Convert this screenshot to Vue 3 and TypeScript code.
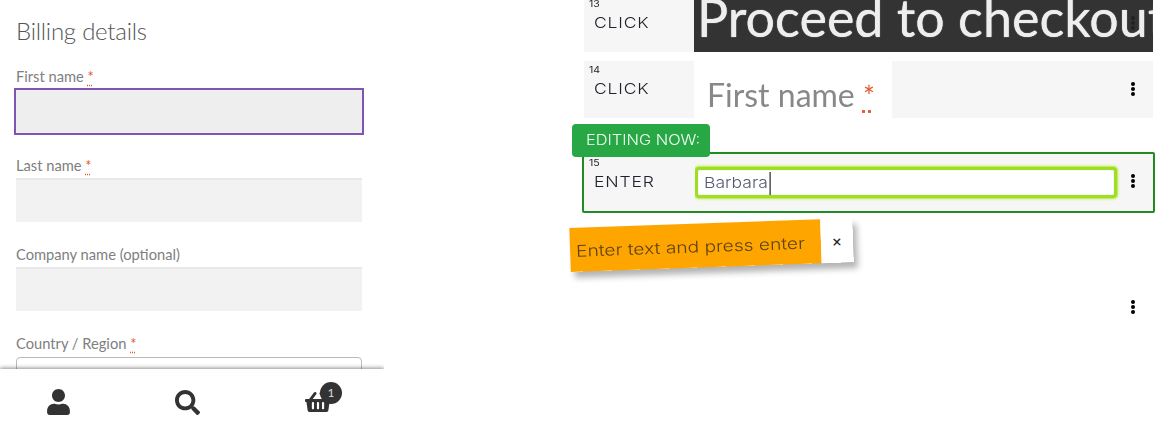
<script setup lang="ts">
interface Field {
  label: string;
  required: boolean;
  focused?: boolean;
}

const fields: Field[] = [
  { label: "First name", required: true, focused: true },
  { label: "Last name", required: true },
  { label: "Company name (optional)", required: false },
];
</script>

<template>
  <div class="page">
    <section class="shop">
      <h3 class="shop-title">Billing details</h3>
      <div v-for="field in fields" :key="field.label" class="field">
        <label class="field-label">
          {{ field.label }}
          <span v-if="field.required" class="req">*</span>
        </label>
        <div class="field-input" :class="{ focused: field.focused }"></div>
      </div>
      <div class="field">
        <label class="field-label">Country / Region <span class="req">*</span></label>
        <div class="field-select">Select</div>
      </div>

      <nav class="shop-nav">
        <svg class="nav-user" viewBox="0 0 448 512">
          <path d="M224 256c70.7 0 128-57.3 128-128S294.7 0 224 0 96 57.3 96 128s57.3 128 128 128zm89.6 32h-16.7c-22.2 10.2-46.9 16-72.9 16s-50.6-5.8-72.9-16h-16.7C60.2 288 0 348.2 0 422.4V464c0 26.5 21.5 48 48 48h352c26.5 0 48-21.5 48-48v-41.6c0-74.2-60.2-134.4-134.4-134.4z" />
        </svg>
        <svg class="nav-search" viewBox="0 0 512 512">
          <path d="M505 442.7L405.3 343c-4.5-4.5-10.6-7-17-7H372c27.6-35.3 44-79.7 44-128C416 93.1 322.9 0 208 0S0 93.1 0 208s93.1 208 208 208c48.3 0 92.7-16.4 128-44v16.3c0 6.4 2.5 12.5 7 17l99.7 99.7c9.4 9.4 24.6 9.4 33.9 0l28.3-28.3c9.4-9.4 9.4-24.6.1-34zM208 336c-70.7 0-128-57.2-128-128 0-70.7 57.2-128 128-128 70.7 0 128 57.2 128 128 0 70.7-57.2 128-128 128z" />
        </svg>
        <div class="nav-cart">
          <svg viewBox="0 0 576 512">
            <path d="M576 216v16c0 13.255-10.745 24-24 24h-8l-26.113 182.788C514.509 462.435 494.257 480 470.37 480H105.63c-23.887 0-44.139-17.565-47.518-41.212L32 256h-8c-13.255 0-24-10.745-24-24v-16c0-13.255 10.745-24 24-24h67.341l106.78-146.821c10.395-14.292 30.407-17.453 44.701-7.058 14.293 10.395 17.453 30.408 7.058 44.701L170.477 192h235.046L326.12 82.821c-10.395-14.292-7.234-34.306 7.059-44.701 14.291-10.395 34.306-7.235 44.701 7.058L484.659 192H552c13.255 0 24 10.745 24 24zM312 392V280c0-13.255-10.745-24-24-24s-24 10.745-24 24v112c0 13.255 10.745 24 24 24s24-10.745 24-24zm112 0V280c0-13.255-10.745-24-24-24s-24 10.745-24 24v112c0 13.255 10.745 24 24 24s24-10.745 24-24zm-224 0V280c0-13.255-10.745-24-24-24s-24 10.745-24 24v112c0 13.255 10.745 24 24 24s24-10.745 24-24z" />
          </svg>
          <span class="cart-badge">1</span>
        </div>
      </nav>
    </section>

    <section class="steps">
      <div class="step step-first">
        <div class="step-cell">
          <span class="step-num wide">13</span>
          <span class="step-action wide">CLICK</span>
        </div>
        <div class="shot shot-dark"><span>Proceed to checkout</span></div>
        <svg class="kebab kebab-faint" viewBox="0 0 4 14"><circle cx="2" cy="2" r="2" /><circle cx="2" cy="7" r="2" /><circle cx="2" cy="12" r="2" /></svg>
      </div>

      <div class="step">
        <div class="step-cell">
          <span class="step-num wide">14</span>
          <span class="step-action wide">CLICK</span>
        </div>
        <div class="shot-split">
          <div class="shot shot-light">First name <span class="req">*</span></div>
          <div class="shot-rest"></div>
        </div>
        <svg class="kebab" viewBox="0 0 4 14"><circle cx="2" cy="2" r="2" /><circle cx="2" cy="7" r="2" /><circle cx="2" cy="12" r="2" /></svg>
      </div>

      <div class="step step-editing">
        <div class="editing-badge"><span class="wide">EDITING NOW:</span></div>
        <div class="step-cell">
          <span class="step-num wide">15</span>
          <span class="step-action wide">ENTER</span>
        </div>
        <div class="enter-wrap">
          <div class="enter-input"><span class="enter-value wide">Barbara</span></div>
        </div>
        <svg class="kebab" viewBox="0 0 4 14"><circle cx="2" cy="2" r="2" /><circle cx="2" cy="7" r="2" /><circle cx="2" cy="12" r="2" /></svg>
      </div>

      <div class="hint">
        <div class="hint-text"><span class="wide">Enter text and press enter</span></div>
        <div class="hint-close">×</div>
      </div>

      <div class="step step-empty">
        <svg class="kebab" viewBox="0 0 4 14"><circle cx="2" cy="2" r="2" /><circle cx="2" cy="7" r="2" /><circle cx="2" cy="12" r="2" /></svg>
      </div>
    </section>
  </div>
</template>

<style>
html,
body {
  margin: 0;
  background: #fff;
  overflow: hidden;
}
</style>

<style scoped>
.page {
  display: flex;
  width: 1164px;
  height: 428px;
  overflow: hidden;
  gap: 186px;
}

/* left: the shop page being recorded */
.shop {
  position: relative;
  flex: 0 0 384px;
  height: 428px;
  overflow: hidden;
  padding: 16px 22px 0 16px;
  box-sizing: border-box;
  font-family: Lato, "Open Sans", sans-serif;
  color: #6d6d6d;
}

.shop-title {
  margin: 0 0 22px;
  font-size: 24px;
  line-height: 29px;
  font-weight: 300;
  letter-spacing: -0.25px;
  color: #555;
}

.field {
  margin-bottom: 23px;
}

.field-label {
  display: block;
  font-size: 14.7px;
  line-height: 18px;
  margin-bottom: 5px;
  color: #808080;
}

.req {
  color: #e2592c;
  text-decoration: underline dotted;
  text-underline-offset: 3px;
}

.field-input {
  height: 44px;
  margin-top: -1px;
  background: #f2f2f2;
  box-shadow: inset 0 2px 0 #e8e8e8;
}

.field-input.focused {
  height: 43px;
  margin-top: 0;
  background: #eee;
  box-shadow: none;
  outline: 2px solid #7f54b3;
}

.field-select {
  height: 40px;
  margin-top: 2px;
  box-sizing: border-box;
  border: 1px solid #bbb;
  border-radius: 4px;
  padding: 7px 8px;
  font-size: 15px;
  color: #333;
}

.shop-nav {
  position: absolute;
  left: 0;
  right: 0;
  bottom: 0;
  height: 59px;
  box-sizing: border-box;
  background: #fff;
  box-shadow: 0 -1px 4px rgba(0, 0, 0, 0.45);
  display: flex;
  align-items: center;
  justify-content: space-between;
  padding: 7px 53px 0 47px;
}

.shop-nav svg {
  fill: #333;
  display: block;
}

.nav-user {
  width: 23px;
  height: 26px;
}

.nav-search {
  width: 25px;
  height: 25px;
}

.nav-cart {
  position: relative;
  width: 26px;
  height: 24px;
}

.nav-cart svg {
  width: 26px;
  height: 24px;
}

.cart-badge {
  position: absolute;
  left: 15px;
  top: -8px;
  width: 22px;
  height: 22px;
  border-radius: 50%;
  background: #333;
  color: #ddd;
  font-size: 12px;
  line-height: 22px;
  text-align: center;
}

/* right: steps list of the tour editor */
.steps {
  flex: 1;
  display: flex;
  flex-direction: column;
  padding-right: 11px;
  font-family: Inter, "DejaVu Sans", sans-serif;
  font-weight: 300;
  color: #22222e;
}

/* the editor's font is a wide one, none of the installed families is */
.wide {
  display: inline-block;
  transform: scaleX(1.17);
  transform-origin: left center;
  white-space: nowrap;
}

.step {
  position: relative;
  flex: none;
  display: flex;
  width: 569px;
  height: 57px;
  margin: 0 0 9px 14px;
}

.step-first {
  margin-top: -5px;
}

.step-cell {
  position: relative;
  flex: 0 0 110px;
  background: #f6f6f6;
  box-sizing: border-box;
  padding: 19px 0 0 10px;
}

.step-num {
  position: absolute;
  left: 5px;
  top: 4px;
  font-size: 9px;
  line-height: 10px;
  font-weight: 400;
}

.step-action {
  display: block;
  font-size: 15px;
  line-height: 18px;
  letter-spacing: 0.7px;
}

.shot {
  font-family: Lato, "Open Sans", sans-serif;
  font-weight: 400;
  white-space: nowrap;
  overflow: hidden;
}

.shot-dark {
  flex: 1;
  background: #333;
  color: #eee;
  font-size: 52px;
  line-height: 44px;
  padding-left: 3px;
  min-width: 0;
}

.shot-dark span {
  display: block;
  text-shadow: 0 0 1px #eee;
  filter: blur(0.6px);
}

.shot-split {
  flex: 1;
  display: flex;
}

.shot-light {
  flex: 0 0 198px;
  box-sizing: border-box;
  padding: 12px 0 0 13px;
  font-size: 32px;
  line-height: 44px;
  color: #888;
  filter: blur(0.5px);
}

.shot-light .req {
  font-size: 28px;
}

.shot-rest {
  flex: 1;
  background: #f6f6f6;
}

.kebab {
  position: absolute;
  right: 18px;
  top: 21px;
  width: 4px;
  height: 14px;
  fill: #000;
}

.kebab-faint {
  fill: #222;
}

.step-editing {
  width: 573px;
  height: 61px;
  box-sizing: border-box;
  margin: 25px 0 0 12px;
  border: 2px solid #228b22;
  border-radius: 2px;
  background: #f6f6f6;
}

.step-editing .step-cell {
  flex-basis: 111px;
  padding: 19px 0 0 10px;
}

.step-editing .kebab {
  right: 18px;
  top: 20px;
}

.editing-badge {
  position: absolute;
  left: -12px;
  top: -30px;
  z-index: 1;
  background: #28a745;
  color: #f0fff5;
  border-radius: 4px;
  font-size: 14px;
  line-height: 31px;
  padding: 0 0 0 14px;
  width: 138px;
  height: 33px;
  box-sizing: border-box;
}

.enter-wrap {
  padding-top: 13px;
}

.enter-input {
  width: 422px;
  height: 31px;
  box-sizing: border-box;
  background: #fff;
  border: 3px solid #9fdf1d;
  border-radius: 4px;
  box-shadow: 0 0 0 1px #c4ec6a, 0 0 3px 1px #c4ec6a, inset 0 0 1px #7f9fe8;
  padding: 2px 0 0 6px;
  font-size: 15px;
  line-height: 21px;
  color: #555a70;
}

.enter-value {
  height: 23px;
  padding-right: 1px;
  border-right: 1px solid #222;
}

.hint {
  flex: none;
  display: flex;
  width: 283px;
  height: 44px;
  margin-top: 10px;
  transform: rotate(-2deg);
  box-shadow: 4px 6px 6px rgba(0, 0, 0, 0.3);
}

.hint-text {
  flex: 1;
  background: #ffa500;
  color: #5e4413;
  font-size: 16px;
  line-height: 46px;
  padding-left: 6px;
}

.hint-text .wide {
  transform: scaleX(1.2);
}

.hint-close {
  flex: 0 0 32px;
  background: #fff;
  color: #222;
  text-align: center;
  font-size: 16px;
  line-height: 44px;
  font-weight: 400;
}

.step-empty {
  margin-top: 12px;
}
</style>
